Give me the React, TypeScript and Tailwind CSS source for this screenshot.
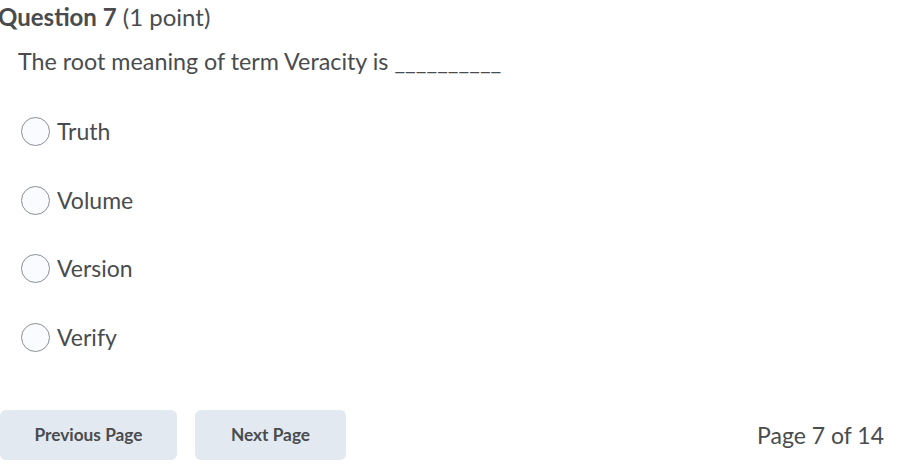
const OPTIONS = ["Truth", "Volume", "Version", "Verify"];

function Radio() {
  return (
    <span className="w-[29px] h-[29px] rounded-full border border-[#8a8f93] bg-[#f9fbff] shrink-0" />
  );
}

export default function App() {
  return (
    <div
      className="w-[909px] h-[471px] bg-white text-[#494c4e] overflow-hidden"
      style={{ fontFamily: "Lato, 'Open Sans', sans-serif" }}
    >
      <h2 className="ml-[-2px] pt-[3px] text-[24px] leading-[28px]">
        <span className="font-bold">Question 7</span> (1 point)
      </h2>
      <p className="ml-[18px] mt-[14px] text-[23.3px] leading-[32px]">
        The root meaning of term Veracity is __________
      </p>
      <div className="mt-[40px] ml-[21px] flex flex-col gap-[39.5px]">
        {OPTIONS.map((o) => (
          <label key={o} className="flex items-center h-[29px] gap-[7px] text-[23px]">
            <Radio />
            <span>{o}</span>
          </label>
        ))}
      </div>
      <div className="mt-[58.5px] flex items-center">
        <button className="w-[177px] h-[50px] rounded-[6px] bg-[#e3e9f1] text-[17.3px] font-bold text-[#494c4e]">
          Previous Page
        </button>
        <button className="ml-[18px] w-[151px] h-[50px] rounded-[6px] bg-[#e3e9f1] text-[17.3px] font-bold text-[#494c4e]">
          Next Page
        </button>
        <span className="ml-auto mr-[25px] text-[23px]">Page 7 of 14</span>
      </div>
    </div>
  );
}
